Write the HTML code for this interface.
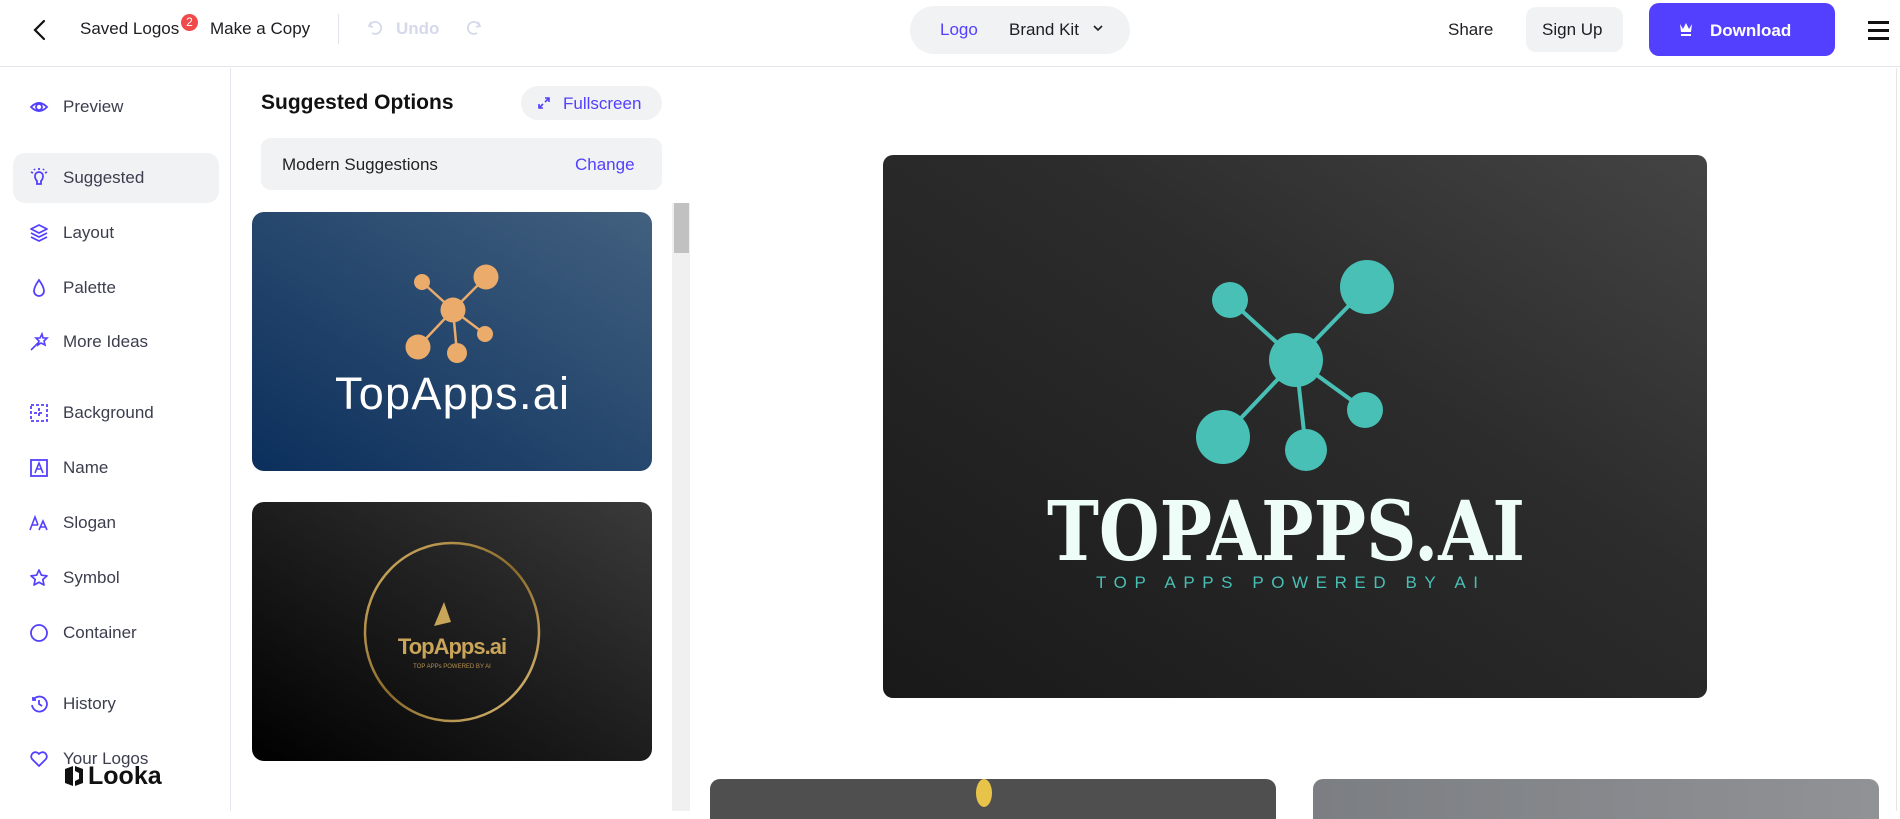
<!DOCTYPE html>
<html><head><meta charset="utf-8"><style>
*{box-sizing:border-box;margin:0;padding:0}
body{width:1900px;height:811px;overflow:hidden;background:#fff;font-family:"Liberation Sans",sans-serif;position:relative;color:#1d1d22}
.abs{position:absolute}
.hdr{left:0;top:0;width:1900px;height:67px;border-bottom:1px solid #e3e5ea;background:#fff}
.t16{font-size:17px}
.side{left:0;top:68px;width:231px;height:743px;border-right:1px solid #e3e6ee}
.item{position:absolute;left:0;height:48px;width:231px;display:flex;align-items:center;font-size:17px;color:#3c3e4e}
.item svg{position:absolute;left:29px}
.item span{position:absolute;left:63px}
.mid{left:232px;top:68px;width:458px;height:743px}
</style></head><body>
<div class="abs hdr"></div>
<svg class="abs" style="left:30px;top:18px" width="20" height="24" viewBox="0 0 20 24"><path d="M14 3 L5 12 L14 21" fill="none" stroke="#111" stroke-width="2.2" stroke-linecap="round"/></svg>
<div class="abs t16" style="left:80px;top:19px">Saved Logos</div>
<div class="abs" style="left:181px;top:14px;width:17px;height:17px;border-radius:50%;background:#f04a4a;color:#fff;font-size:12px;text-align:center;line-height:17px">2</div>
<div class="abs t16" style="left:210px;top:19px">Make a Copy</div>
<div class="abs" style="left:338px;top:14px;width:1px;height:30px;background:#e2e4ea"></div>
<svg class="abs" style="left:367px;top:19px" width="18" height="18" viewBox="0 0 18 18"><path d="M4 3 L2 7 L6 8 M2.5 7 A6 6 0 1 1 5 14" fill="none" stroke="#d5d9ea" stroke-width="1.8"/></svg>
<div class="abs t16" style="left:396px;top:19px;color:#d5d9ea;font-weight:bold">Undo</div>
<svg class="abs" style="left:464px;top:19px" width="18" height="18" viewBox="0 0 18 18"><path d="M14 3 L16 7 L12 8 M15.5 7 A6 6 0 1 0 13 14" fill="none" stroke="#d5d9ea" stroke-width="1.8"/></svg>

<div class="abs" style="left:910px;top:6px;width:220px;height:48px;border-radius:24px;background:#f1f2f4"></div>
<div class="abs t16" style="left:940px;top:20px;color:#5340ff">Logo</div>
<div class="abs t16" style="left:1009px;top:20px">Brand Kit</div>
<svg class="abs" style="left:1093px;top:24px" width="10" height="8" viewBox="0 0 10 8"><path d="M1 2 L5 6 L9 2" fill="none" stroke="#222" stroke-width="1.6"/></svg>
<div class="abs t16" style="left:1448px;top:20px">Share</div>
<div class="abs" style="left:1526px;top:7px;width:97px;height:45px;border-radius:10px;background:#f1f2f4"></div>
<div class="abs t16" style="left:1542px;top:20px">Sign Up</div>
<div class="abs" style="left:1649px;top:3px;width:186px;height:53px;border-radius:10px;background:#5340ff"></div>
<svg class="abs" style="left:1678px;top:20px" width="16" height="17" viewBox="0 0 16 17"><path d="M2 4 L5 9 L8 3 L11 9 L14 4 L13 12 L3 12Z M3 14 H13 V16 H3Z" fill="#fff"/></svg>
<div class="abs t16" style="left:1710px;top:21px;color:#fff;font-weight:bold">Download</div>
<div class="abs" style="left:1868px;top:21px;width:21px;height:3px;background:#111"></div>
<div class="abs" style="left:1868px;top:29px;width:21px;height:3px;background:#111"></div>
<div class="abs" style="left:1868px;top:37px;width:21px;height:3px;background:#111"></div>

<div class="abs side">
<div class="abs" style="left:13px;top:85px;width:206px;height:50px;border-radius:12px;background:#f1f2f4"></div>
<div class="item" style="top:15px"><svg width="20" height="20" viewBox="0 0 20 20"><path d="M2 10 Q10 2 18 10 Q10 18 2 10Z" fill="none" stroke="#5340ff" stroke-width="1.8"/><circle cx="10" cy="10" r="3" fill="none" stroke="#5340ff" stroke-width="1.8"/></svg><span>Preview</span></div>
<div class="item" style="top:86px"><svg width="20" height="22" viewBox="0 0 20 22"><path d="M6 9 A4 4 0 1 1 14 9 Q14 12 12 14 V17 H8 V14 Q6 12 6 9Z M2 5 L4 6 M18 5 L16 6 M10 1 V3 M5 2 L6 3 M15 2 L14 3" fill="none" stroke="#5340ff" stroke-width="1.8"/></svg><span>Suggested</span></div>
<div class="item" style="top:141px"><svg width="20" height="20" viewBox="0 0 20 20"><path d="M10 2 L18 6 L10 10 L2 6Z M2 10 L10 14 L18 10 M2 14 L10 18 L18 14" fill="none" stroke="#5340ff" stroke-width="1.8" stroke-linejoin="round"/></svg><span>Layout</span></div>
<div class="item" style="top:196px"><svg width="20" height="20" viewBox="0 0 20 20"><path d="M10 2 Q5 9 5 13 A5 5 0 0 0 15 13 Q15 9 10 2Z" fill="none" stroke="#5340ff" stroke-width="1.8"/></svg><span>Palette</span></div>
<div class="item" style="top:250px"><svg width="20" height="20" viewBox="0 0 20 20"><path d="M2 18 L10 10 M13 2 L14 6 L18 6 L15 9 L16 13 L12 11 L9 13 L10 9 L7 6 L11 6Z" fill="none" stroke="#5340ff" stroke-width="1.6"/></svg><span>More Ideas</span></div>
<div class="item" style="top:321px"><svg width="20" height="20" viewBox="0 0 20 20"><path d="M2 2 H18 V18 H2Z M10 5 V15 M5 10 H15" fill="none" stroke="#5340ff" stroke-width="1.8" stroke-dasharray="3 2"/></svg><span>Background</span></div>
<div class="item" style="top:376px"><svg width="20" height="20" viewBox="0 0 20 20"><rect x="2" y="2" width="16" height="16" fill="none" stroke="#5340ff" stroke-width="1.8"/><path d="M6 15 L10 5 L14 15 M7.5 11 H12.5" fill="none" stroke="#5340ff" stroke-width="1.6"/></svg><span>Name</span></div>
<div class="item" style="top:431px"><svg width="20" height="20" viewBox="0 0 20 20"><path d="M1 17 L6 4 L9 12 M3 12 H9 M10 17 L14 8 L18 17 M11.5 14 H16.5" fill="none" stroke="#5340ff" stroke-width="1.6"/></svg><span>Slogan</span></div>
<div class="item" style="top:486px"><svg width="20" height="20" viewBox="0 0 20 20"><path d="M10 2 L12.4 7.2 L18 7.8 L13.8 11.5 L15 17 L10 14.2 L5 17 L6.2 11.5 L2 7.8 L7.6 7.2Z" fill="none" stroke="#5340ff" stroke-width="1.7" stroke-linejoin="round"/></svg><span>Symbol</span></div>
<div class="item" style="top:541px"><svg width="20" height="20" viewBox="0 0 20 20"><circle cx="10" cy="10" r="8" fill="none" stroke="#5340ff" stroke-width="1.8"/></svg><span>Container</span></div>
<div class="item" style="top:612px"><svg width="20" height="20" viewBox="0 0 20 20"><path d="M4 3 V6 H7 M4.5 5.5 A7.5 7.5 0 1 1 3 11 M10 6 V10 L13 12" fill="none" stroke="#5340ff" stroke-width="1.8"/></svg><span>History</span></div>
<div class="item" style="top:667px"><svg width="20" height="20" viewBox="0 0 20 20"><path d="M10 17 L3 10 A4 4 0 0 1 10 5 A4 4 0 0 1 17 10Z" fill="none" stroke="#5340ff" stroke-width="1.8" stroke-linejoin="round"/></svg><span>Your Logos</span></div>
<svg class="abs" style="left:63px;top:697px" width="22" height="23" viewBox="0 0 22 23"><path d="M2 4 L10 1 V21 L2 18Z M12 1 L20 4 V18 L12 21 V16 L16 14 V8 L12 6Z" fill="#111"/></svg>
<div class="abs" style="left:88px;top:694px;font-size:25px;font-weight:bold;color:#111">Looka</div>
</div>

<div class="abs mid">
<div class="abs" style="left:29px;top:23px;font-size:21px;font-weight:bold;color:#111">Suggested Options</div>
<div class="abs" style="left:289px;top:18px;width:141px;height:34px;border-radius:17px;background:#f1f2f4"></div>
<svg class="abs" style="left:305px;top:28px" width="14" height="14" viewBox="0 0 14 14"><path d="M8 2 H12 V6 M12 2 L8 6 M6 12 H2 V8 M2 12 L6 8" fill="none" stroke="#5340ff" stroke-width="1.6"/></svg>
<div class="abs t16" style="left:331px;top:26px;color:#5340ff">Fullscreen</div>
<div class="abs" style="left:29px;top:70px;width:401px;height:52px;border-radius:10px;background:#f1f2f4"></div>
<div class="abs t16" style="left:50px;top:87px;color:#222">Modern Suggestions</div>
<div class="abs t16" style="left:343px;top:87px;color:#5340ff">Change</div>
<div class="abs" style="left:440px;top:135px;width:18px;height:608px;background:#f0f0f0"></div>
<div class="abs" style="left:442px;top:135px;width:15px;height:50px;background:#c1c1c1"></div>
<svg class="abs" style="left:20px;top:144px" width="400" height="259" viewBox="252 212 400 259"><defs><linearGradient id="g1" x1="0" y1="1" x2="1" y2="0"><stop offset="0" stop-color="#0b2f5c"/><stop offset="1" stop-color="#42607f"/></linearGradient></defs>
<rect x="252" y="212" width="400" height="259" rx="12" fill="url(#g1)"/>
<g stroke="#ebab6b" stroke-width="2.5"><line x1="453" y1="310" x2="486" y2="277"/><line x1="453" y1="310" x2="422" y2="282"/><line x1="453" y1="310" x2="418" y2="347"/><line x1="453" y1="310" x2="457" y2="353"/><line x1="453" y1="310" x2="485" y2="334"/></g>
<g fill="#ebab6b"><circle cx="453" cy="310" r="12.5"/><circle cx="486" cy="277" r="12.5"/><circle cx="422" cy="282" r="8"/><circle cx="418" cy="347" r="12.5"/><circle cx="457" cy="353" r="10"/><circle cx="485" cy="334" r="8"/></g>
<text x="452" y="409" text-anchor="middle" font-family="Liberation Sans" font-size="45" fill="#fff" textLength="234">TopApps.ai</text></svg>
<svg class="abs" style="left:20px;top:434px" width="400" height="259" viewBox="0 0 400 259"><defs><linearGradient id="g2" x1="0" y1="1" x2="1" y2="0"><stop offset="0" stop-color="#000"/><stop offset="1" stop-color="#3a3a3a"/></linearGradient><linearGradient id="gold" x1="0" y1="0" x2="1" y2="1"><stop offset="0" stop-color="#d8b567"/><stop offset="0.5" stop-color="#8a6a2a"/><stop offset="1" stop-color="#e3c27a"/></linearGradient></defs>
<rect width="400" height="259" rx="12" fill="url(#g2)"/>
<ellipse cx="200" cy="130" rx="87" ry="89" fill="none" stroke="url(#gold)" stroke-width="2.5"/>
<path d="M182 124 L192 100 L199 120Z" fill="#c9a55a"/>
<text x="200" y="152" text-anchor="middle" font-family="Liberation Sans" font-weight="bold" font-size="22" fill="#c9a55a" letter-spacing="-1">TopApps.ai</text>
<text x="200" y="166" text-anchor="middle" font-family="Liberation Sans" font-size="6" fill="#b49050">TOP APPs POWERED BY AI</text></svg>
</div>

<svg class="abs" style="left:883px;top:155px" width="824" height="543" viewBox="883 155 824 543"><defs><linearGradient id="g3" x1="0" y1="1" x2="1" y2="0"><stop offset="0" stop-color="#191919"/><stop offset="0.6" stop-color="#2c2c2c"/><stop offset="1" stop-color="#444"/></linearGradient></defs>
<rect x="883" y="155" width="824" height="543" rx="10" fill="url(#g3)"/>
<g stroke="#49c0b6" stroke-width="4"><line x1="1296" y1="360" x2="1367" y2="287"/><line x1="1296" y1="360" x2="1230" y2="300"/><line x1="1296" y1="360" x2="1223" y2="437"/><line x1="1296" y1="360" x2="1306" y2="450"/><line x1="1296" y1="360" x2="1365" y2="410"/></g>
<g fill="#49c0b6"><circle cx="1296" cy="360" r="27"/><circle cx="1367" cy="287" r="27"/><circle cx="1230" cy="300" r="18"/><circle cx="1223" cy="437" r="27"/><circle cx="1306" cy="450" r="21"/><circle cx="1365" cy="410" r="18"/></g>
<text x="1047" y="560" font-family="DejaVu Serif" font-weight="bold" font-size="82" fill="#eefdf8" textLength="478" lengthAdjust="spacingAndGlyphs">TOPAPPS.AI</text>
<text x="1096" y="588" font-family="Liberation Sans" font-size="17" fill="#49c0b6" textLength="382">TOP APPS POWERED BY AI</text></svg>

<div class="abs" style="left:710px;top:779px;width:566px;height:40px;border-radius:10px 10px 0 0;background:#4f4f4f"></div>
<div class="abs" style="left:976px;top:779px;width:16px;height:28px;border-radius:50%;background:#e8c34a"></div>
<div class="abs" style="left:1313px;top:779px;width:566px;height:40px;border-radius:10px 10px 0 0;background:linear-gradient(90deg,#7b7e82,#909296)"></div>
<div class="abs" style="left:1896px;top:68px;width:1px;height:743px;background:#e5e5e5"></div>
</body></html>
